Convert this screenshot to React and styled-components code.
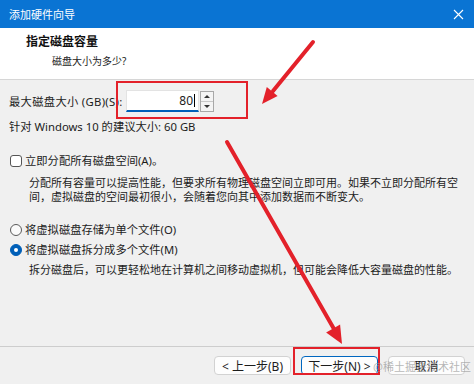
import React from 'react';
import styled, { createGlobalStyle } from 'styled-components';

const GlobalStyle = createGlobalStyle`
  html, body {
    margin: 0;
    padding: 0;
  }
  body {
    background: #f0f0f0;
    font-family: "Noto Sans", "Noto Sans CJK SC", sans-serif;
  }
`;

const Window = styled.div`
  position: relative;
  width: 474px;
  height: 384px;
  overflow: hidden;
  display: flex;
  flex-direction: column;
  background: #f0f0f0;
  color: #1c1c1c;
  font-size: 11.3px;
`;

const TitleBar = styled.div`
  height: 28px;
  flex: none;
  display: flex;
  align-items: center;
  justify-content: space-between;
  padding: 0 10px 0 9px;
  background: #0a74d3;
  color: #fff;
  font-size: 11px;
`;

const Header = styled.div`
  height: 52px;
  flex: none;
  box-sizing: border-box;
  padding: 6px 0 0 26px;
  background: #fff;
  border-bottom: 1px solid #d6d6d6;
`;

const HeaderTitle = styled.div`
  font-size: 12px;
  font-weight: bold;
  line-height: 16px;
  color: #111;
`;

const HeaderSub = styled.div`
  margin-top: 3px;
  padding-left: 26px;
  font-size: 10px;
  line-height: 16px;
`;

const Body = styled.div`
  flex: 1;
  padding: 9px 9px 0;
`;

const SizeRow = styled.div`
  display: flex;
  align-items: center;
  height: 24px;
`;

const Label = styled.span`
  min-width: 117px;
  letter-spacing: 0.3px;
`;

const NumberInput = styled.div`
  width: 73px;
  height: 22px;
  box-sizing: border-box;
  display: flex;
  align-items: center;
  justify-content: flex-end;
  padding-right: 3px;
  background: #fff;
  border: 1px solid #e3e3e3;
  border-bottom: 2px solid #005fb8;
  font-size: 12px;
`;

const Caret = styled.span`
  width: 1px;
  height: 13px;
  margin-left: 1px;
  background: #000;
`;

const Spinner = styled.div`
  width: 14px;
  height: 21px;
  margin-left: 1px;
  box-sizing: border-box;
  display: flex;
  flex-direction: column;
  border: 1px solid #a8a8a8;
  background: #f4f4f4;
`;

const SpinHalf = styled.div`
  flex: 1;
  display: flex;
  align-items: center;
  justify-content: center;
  & + & {
    border-top: 1px solid #c8c8c8;
  }
  &::after {
    content: "";
    border-left: 3px solid transparent;
    border-right: 3px solid transparent;
    ${(p) => (p.$down ? 'border-top: 3px solid #333;' : 'border-bottom: 3px solid #333;')}
  }
`;

const Hint = styled.div`
  margin-top: 6px;
  line-height: 16px;
`;

const OptionRow = styled.div`
  display: flex;
  align-items: center;
  gap: 3px;
  padding-left: 1px;
  line-height: 16px;
  margin-top: ${(p) => p.$gap}px;
`;

const CheckBox = styled.span`
  width: 12px;
  height: 12px;
  box-sizing: border-box;
  border: 1px solid #555;
  border-radius: 3px;
  background: #fff;
`;

const Radio = styled.span`
  width: 12px;
  height: 12px;
  box-sizing: border-box;
  border-radius: 50%;
  display: flex;
  align-items: center;
  justify-content: center;
  border: 1px solid ${(p) => (p.$checked ? '#005fb8' : '#5a5a5a')};
  background: ${(p) => (p.$checked ? '#005fb8' : '#fafafa')};
  &::after {
    content: "";
    width: 4px;
    height: 4px;
    border-radius: 50%;
    background: ${(p) => (p.$checked ? '#fff' : 'transparent')};
  }
`;

const Description = styled.div`
  padding-left: 20px;
  white-space: nowrap;
  font-size: 11px;
  line-height: ${(p) => p.$lh}px;
  margin-top: ${(p) => p.$gap}px;
`;

const Footer = styled.div`
  height: 38px;
  flex: none;
  box-sizing: border-box;
  display: flex;
  justify-content: flex-end;
  gap: 10px;
  padding: 9px 9px 0;
  border-top: 1px solid #cdcdcd;
`;

const Button = styled.button`
  width: 77px;
  height: 19px;
  padding: 0;
  box-sizing: border-box;
  background: #fdfdfd;
  border: 1px solid ${(p) => (p.$focused ? '#0067c0' : '#d2d2d2')};
  border-radius: 4px;
  font-family: inherit;
  font-size: 12px;
  color: #1c1c1c;
`;

const Highlight = styled.div`
  position: absolute;
  left: ${(p) => p.$x}px;
  top: ${(p) => p.$y}px;
  width: ${(p) => p.$w}px;
  height: ${(p) => p.$h}px;
  box-sizing: border-box;
  border: 2px solid #e3212a;
  pointer-events: none;
`;

const Watermark = styled.div`
  position: absolute;
  left: 373px;
  top: 359px;
  font-size: 11px;
  line-height: 16px;
  color: rgba(150, 150, 150, 0.7);
  pointer-events: none;
`;

const Arrows = styled.svg`
  position: absolute;
  left: 0;
  top: 0;
  pointer-events: none;
`;

const CloseIcon = () => (
  <svg width="11" height="11" viewBox="0 0 11 11">
    <path d="M1 1 L10 10 M10 1 L1 10" stroke="#fff" strokeWidth="1.1" />
  </svg>
);

export default function App() {
  return (
    <Window>
      <GlobalStyle />
      <TitleBar>
        <span>添加硬件向导</span>
        <CloseIcon />
      </TitleBar>
      <Header>
        <HeaderTitle>指定磁盘容量</HeaderTitle>
        <HeaderSub>磁盘大小为多少?</HeaderSub>
      </Header>
      <Body>
        <SizeRow>
          <Label>最大磁盘大小 (GB)(S):</Label>
          <NumberInput>
            80
            <Caret />
          </NumberInput>
          <Spinner>
            <SpinHalf />
            <SpinHalf $down />
          </Spinner>
        </SizeRow>
        <Hint>针对 Windows 10 的建议大小: 60 GB</Hint>
        <OptionRow $gap={18}>
          <CheckBox />
          <span>立即分配所有磁盘空间(A)。</span>
        </OptionRow>
        <Description $lh={14} $gap={7}>
          分配所有容量可以提高性能，但要求所有物理磁盘空间立即可用。如果不立即分配所有空
          <br />
          间，虚拟磁盘的空间最初很小，会随着您向其中添加数据而不断变大。
        </Description>
        <OptionRow $gap={18}>
          <Radio />
          <span>将虚拟磁盘存储为单个文件(O)</span>
        </OptionRow>
        <OptionRow $gap={4}>
          <Radio $checked />
          <span>将虚拟磁盘拆分成多个文件(M)</span>
        </OptionRow>
        <Description $lh={16} $gap={4}>
          拆分磁盘后，可以更轻松地在计算机之间移动虚拟机，但可能会降低大容量磁盘的性能。
        </Description>
      </Body>
      <Footer>
        <Button>&lt; 上一步(B)</Button>
        <Button $focused>下一步(N) &gt;</Button>
        <Button>取消</Button>
      </Footer>

      <Highlight $x={116} $y={81} $w={132} $h={38} />
      <Highlight $x={293} $y={347} $w={87} $h={28} />
      <Watermark>@稀土掘金技术社区</Watermark>
      <Arrows width="474" height="384" viewBox="0 0 474 384">
        <g stroke="#e3212a" strokeWidth="4" strokeLinecap="round" fill="#e3212a">
          <line x1="313" y1="42" x2="273" y2="91" />
          <polygon points="262,104 277.6,96.1 266.8,87.1" stroke="none" />
          <line x1="227" y1="142" x2="334" y2="329" />
          <polygon points="342,344 340.1,324.4 326.1,332.4" stroke="none" />
        </g>
      </Arrows>
    </Window>
  );
}
